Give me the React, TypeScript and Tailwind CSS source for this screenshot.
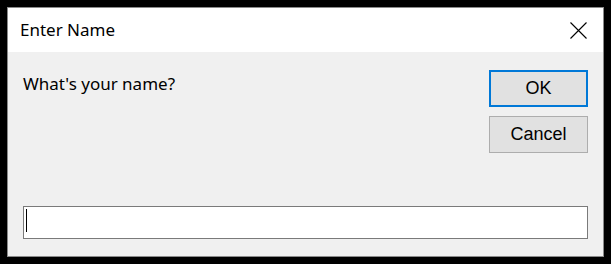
export default function App() {
  return (
    <div className="w-[611px] h-[264px] bg-black p-[7px]">
      <div className="w-full h-full border border-[#8a8a8a] flex flex-col">
        {/* Title bar */}
        <div className="h-[44px] bg-white flex items-center justify-between pl-[12px] pr-[16px]">
          <span className="text-[17px] text-black" style={{ fontFamily: '"Noto Sans", sans-serif' }}>
            Enter Name
          </span>
          <svg width="17" height="17" viewBox="0 0 17 17" className="text-black">
            <path d="M0.5 0.5 L16.5 16.5 M16.5 0.5 L0.5 16.5" stroke="currentColor" strokeWidth="1.1" fill="none" />
          </svg>
        </div>

        {/* Body */}
        <div className="flex-1 bg-[#f0f0f0] flex flex-col pt-[18px] pb-[17px] px-[15px]">
          <div className="flex justify-between">
            <span
              className="text-[17px] text-black leading-[22px] mt-[3px]"
              style={{ fontFamily: '"Noto Sans", sans-serif' }}
            >
              What's your name?
            </span>
            <div className="flex flex-col gap-[9px]">
              <button
                className="w-[99px] h-[37px] bg-[#e1e1e1] border-2 border-[#0078d7] text-[18px] text-black"
                style={{ fontFamily: '"Liberation Sans", Arial, sans-serif' }}
              >
                OK
              </button>
              <button
                className="w-[99px] h-[37px] bg-[#e1e1e1] border border-[#adadad] text-[18px] text-black"
                style={{ fontFamily: '"Liberation Sans", Arial, sans-serif' }}
              >
                Cancel
              </button>
            </div>
          </div>
          <div className="flex-1" />
          <div className="h-[33px] bg-white border border-[#7a7a7a] flex items-start pt-[2px] pl-[2px]">
            <div className="w-[1px] h-[23px] bg-black" />
          </div>
        </div>
      </div>
    </div>
  );
}
